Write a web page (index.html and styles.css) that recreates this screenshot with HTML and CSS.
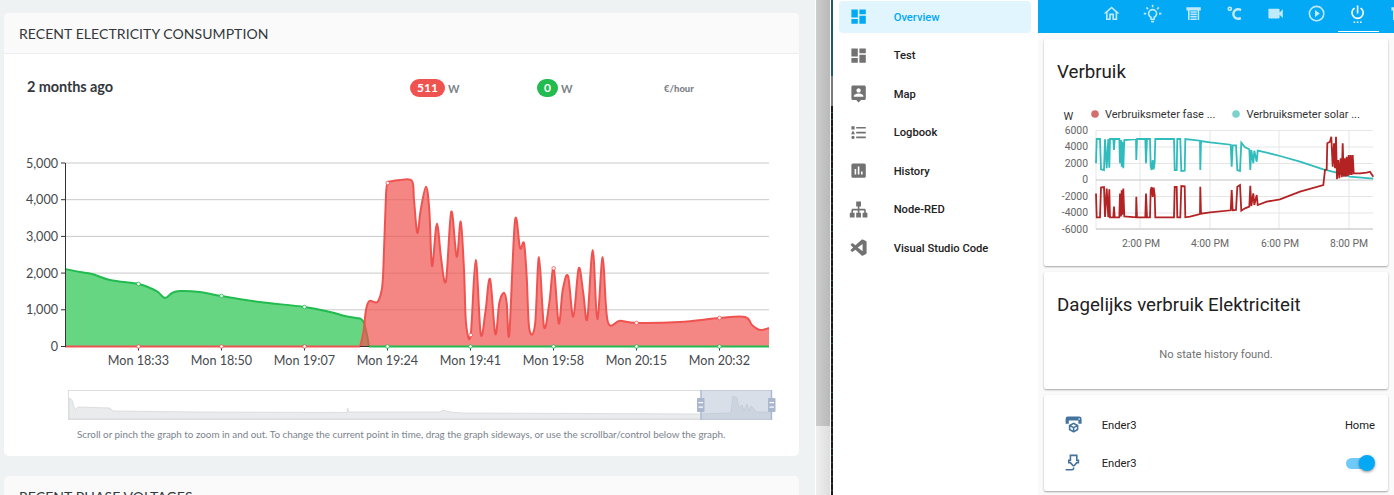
FILE: index.html
```html
<!DOCTYPE html>
<html lang="en">
<head>
  <meta charset="UTF-8">
  <title>Energy dashboard</title>
  <link rel="stylesheet" href="styles.css">
</head>
<body>
  <main class="energy">
    <section class="panel panel-main">
      <h2 class="panel-head">RECENT ELECTRICITY CONSUMPTION</h2>
      <div class="readings">
        <strong class="ago">2 months ago</strong>
        <div class="reading"><span class="badge badge-red">511</span><span class="unit">W</span></div>
        <div class="reading"><span class="badge badge-green">0</span><span class="unit">W</span></div>
        <div class="reading"><span class="unit unit-small">€/hour</span></div>
      </div>
      <svg id="powerChart" class="power-chart" viewBox="4 147 795 275" width="795" height="275"></svg>
      <p class="hint">Scroll or pinch the graph to zoom in and out. To change the current point in time, drag the graph sideways, or use the scrollbar/control below the graph.</p>
    </section>
    <section class="panel">
      <h2 class="panel-head">RECENT PHASE VOLTAGES</h2>
    </section>
  </main>

  <div class="scrollbar"><div class="scrollbar-thumb"></div></div>
  <div class="edge"><div class="edge-teal"></div><div class="edge-grey"></div><div class="edge-dark"></div></div>

  <nav class="sidebar">
    <a class="nav-item active"><svg class="icon" viewBox="0 0 24 24"><path d="M13,3V9H21V3M13,21H21V11H13M3,21H11V15H3M3,13H11V3H3V13Z"/></svg>Overview</a>
    <a class="nav-item"><svg class="icon" viewBox="0 0 24 24"><path d="M13,3V9H21V3M13,21H21V11H13M3,21H11V15H3M3,13H11V3H3V13Z"/></svg>Test</a>
    <a class="nav-item"><svg class="icon" viewBox="0 0 24 24"><path d="M18,16H6V15.1C6,13.1 10,12 12,12C14,12 18,13.1 18,15.1M12,5.3C13.5,5.3 14.7,6.5 14.7,8C14.7,9.5 13.5,10.7 12,10.7C10.5,10.7 9.3,9.5 9.3,8C9.3,6.5 10.5,5.3 12,5.3M19,2H5C3.89,2 3,2.89 3,4V18A2,2 0 0,0 5,20H9L12,23L15,20H19A2,2 0 0,0 21,18V4C21,2.89 20.1,2 19,2Z"/></svg>Map</a>
    <a class="nav-item"><svg class="icon" viewBox="0 0 24 24"><path d="M5,9.5L7.5,14H2.5L5,9.5M3,4H7V8H3V4M5,20A2,2 0 0,0 7,18A2,2 0 0,0 5,16A2,2 0 0,0 3,18A2,2 0 0,0 5,20M9,5V7H21V5H9M9,19H21V17H9V19M9,13H21V11H9V13Z"/></svg>Logbook</a>
    <a class="nav-item"><svg class="icon" viewBox="0 0 24 24"><path d="M19,3H5C3.9,3 3,3.9 3,5V19C3,20.1 3.9,21 5,21H19C20.1,21 21,20.1 21,19V5C21,3.9 20.1,3 19,3M9,17H7V10H9V17M13,17H11V7H13V17M17,17H15V13H17V17Z"/></svg>History</a>
    <a class="nav-item"><svg class="icon" viewBox="0 0 24 24"><path d="M9,2V8H11V11H5C3.89,11 3,11.89 3,13V16H1V22H7V16H5V13H11V16H9V22H15V16H13V13H19V16H17V22H23V16H21V13C21,11.89 20.11,11 19,11H13V8H15V2H9Z"/></svg>Node-RED</a>
    <a class="nav-item"><svg class="icon" viewBox="0 0 24 24"><path fill-rule="evenodd" d="M17,16.47V7.39L11,11.93M2.22,9.19C1.93,8.87 1.88,8.4 2.2,8.1C2.2,8.1 3.4,7 3.75,6.67C4.1,6.34 4.5,6.5 4.65,6.62L8,9.17L15.78,2.05C16.09,1.74 16.63,1.62 17.25,1.95L21.25,3.86C21.6,4.06 22,4.38 22,5V18.87C22,19.28 21.7,19.72 21.39,19.89L17,22.06C16.68,22.19 16.06,22.06 15.85,21.85L8,14.7L4.62,17.27C4.3,17.5 3.9,17.45 3.64,17.22L2.2,15.9C1.88,15.58 1.92,15.1 2.25,14.77L5.2,11.93L2.22,9.19Z"/></svg>Visual Studio Code</a>
  </nav>

  <div class="hass">
    <header class="tabs">
      <a class="tab"><svg class="icon" viewBox="0 0 24 24"><path d="M12 5.69L17 10.19V18H15V12H9V18H7V10.19L12 5.69M12 3L2 12H5V20H11V14H13V20H19V12H22L12 3Z"/></svg></a>
      <a class="tab"><svg class="icon" viewBox="0 0 24 24"><path d="M20,11H23V13H20V11M1,11H4V13H1V11M13,1V4H11V1H13M4.92,3.5L7.05,5.64L5.63,7.05L3.5,4.93L4.92,3.5M16.95,5.63L19.07,3.5L20.5,4.93L18.36,7.05L16.95,5.63M12,6A6,6 0 0,1 18,12C18,14.22 16.79,16.16 15,17.2V19A1,1 0 0,1 14,20H10A1,1 0 0,1 9,19V17.2C7.21,16.16 6,14.22 6,12A6,6 0 0,1 12,6M14,21V22A1,1 0 0,1 13,23H11A1,1 0 0,1 10,22V21H14M11,18H13V15.87C14.73,15.43 16,13.86 16,12A4,4 0 0,0 12,8A4,4 0 0,0 8,12C8,13.86 9.27,15.43 11,15.87V18Z"/></svg></a>
      <a class="tab"><svg class="icon" viewBox="0 0 24 24"><path d="M3 4H21V8H19V20H17V8H7V20H5V8H3V4M8 9H16V11H8V9M8 12H16V14H8V12M8 15H16V17H8V15M8 18H16V20H8V18Z"/></svg></a>
      <a class="tab"><svg class="icon" viewBox="0 0 24 24"><path d="M16.5,5C18.05,5 19.5,5.47 20.69,6.28L19.53,9.17C18.73,8.44 17.67,8 16.5,8C14,8 12,10 12,12.5C12,15 14,17 16.5,17C17.53,17 18.47,16.66 19.23,16.08L20.37,18.93C19.24,19.61 17.92,20 16.5,20C12.36,20 9,16.64 9,12.5C9,8.36 12.36,5 16.5,5M6,3A3,3 0 0,1 9,6A3,3 0 0,1 6,9A3,3 0 0,1 3,6A3,3 0 0,1 6,3M6,5A1,1 0 0,0 5,6A1,1 0 0,0 6,7A1,1 0 0,0 7,6A1,1 0 0,0 6,5Z"/></svg></a>
      <a class="tab"><svg class="icon" viewBox="0 0 24 24"><path d="M17,10.5V7A1,1 0 0,0 16,6H4A1,1 0 0,0 3,7V17A1,1 0 0,0 4,18H16A1,1 0 0,0 17,17V13.5L21,17.5V6.5L17,10.5Z"/></svg></a>
      <a class="tab"><svg class="icon" viewBox="0 0 24 24"><path d="M10,16.5L16,12L10,7.5V16.5M12,2A10,10 0 0,0 2,12A10,10 0 0,0 12,22A10,10 0 0,0 22,12A10,10 0 0,0 12,2M12,20C7.59,20 4,16.41 4,12C4,7.59 7.59,4 12,4C16.41,4 20,7.59 20,12C20,16.41 16.41,20 12,20Z"/></svg></a>
      <a class="tab active"><svg class="icon" viewBox="0 0 24 24"><path d="M15,24H17V22H15M16.56,4.44L15.11,5.89C16.84,6.94 18,8.83 18,11A6,6 0 0,1 12,17A6,6 0 0,1 6,11C6,8.83 7.16,6.94 8.88,5.88L7.44,4.44C5.36,5.88 4,8.28 4,11A8,8 0 0,0 12,19A8,8 0 0,0 20,11C20,8.28 18.64,5.88 16.56,4.44M13,2H11V12H13M11,24H13V22H11M7,24H9V22H7V24Z"/></svg></a>
      <a class="tab"><svg class="icon" viewBox="0 0 24 24"><path d="M3 4H21V8H19V20H17V8H7V20H5V8H3V4Z"/></svg></a>
    </header>
    <div class="cards">
      <section class="card card-graph">
        <h1 class="card-title">Verbruik</h1>
        <svg id="usageChart" class="usage-chart" viewBox="1044 104 344 146" width="344" height="146"></svg>
      </section>
      <section class="card card-empty">
        <h1 class="card-title">Dagelijks verbruik Elektriciteit</h1>
        <p class="no-history">No state history found.</p>
      </section>
      <section class="card card-rows">
        <div class="row">
          <svg class="icon icon-state" viewBox="0 0 24 24"><path d="M19,6A1,1 0 0,0 20,5A1,1 0 0,0 19,4A1,1 0 0,0 18,5A1,1 0 0,0 19,6M19,2A3,3 0 0,1 22,5V11H18V7H6V11H2V5A3,3 0 0,1 5,2H19M18,18.25C18,18.63 17.79,18.96 17.47,19.13L12.57,21.82C12.4,21.94 12.2,22 12,22C11.8,22 11.6,21.94 11.43,21.82L6.53,19.13C6.21,18.96 6,18.63 6,18.25V13C6,12.62 6.21,12.29 6.53,12.12L11.43,9.68C11.6,9.56 11.8,9.5 12,9.5C12.2,9.5 12.4,9.56 12.57,9.68L17.47,12.12C17.79,12.29 18,12.62 18,13V18.25M12,11.65L9.04,13L12,14.6L14.96,13L12,11.65M8,17.66L11,19.29V16.33L8,14.71V17.66M16,17.66V14.71L13,16.33V19.29L16,17.66Z"/></svg>
          <span class="row-name">Ender3</span>
          <span class="row-value">Home</span>
        </div>
        <div class="row">
          <svg class="icon icon-state" viewBox="0 0 24 24"><path d="M7,2H17V8H19V13H16.5L13,17H11L7.5,13H5V8H7V2M9,4V10H7V11H8.41L11.91,15H12.09L15.59,11H17V10H15V4H9M10,22H2V20H10A1,1 0 0,0 11,19V18H13V19A3,3 0 0,1 10,22Z"/></svg>
          <span class="row-name">Ender3</span>
          <span class="toggle"><span class="toggle-knob"></span></span>
        </div>
      </section>
    </div>
  </div>
  <script src="chart.js"></script>
</body>
</html>
```

FILE: styles.css
```css
* { box-sizing: border-box; }
html, body {
  margin: 0;
  height: 495px;
  overflow: hidden;
}
body {
  display: flex;
  width: 1394px;
  background: #fff;
  font-family: Roboto, Arial, sans-serif;
}
/* Left window: energy monitor */
.energy {
  width: 815px;
  height: 495px;
  flex: none;
  overflow: hidden;
  background: #eef2f3;
  padding: 13px 16px 0 4px;
  font-family: Lato, Arial, sans-serif;
}
.panel {
  background: #fff;
  border-radius: 5px;
  margin-bottom: 20px;
  overflow: hidden;
}
.panel-main {
  height: 443px;
}
.panel-head {
  margin: 0;
  height: 41px;
  padding: 0 15px;
  background: #fafafa;
  border-bottom: 1px solid #eceeef;
  color: #33383c;
  font-size: 14px;
  font-weight: 400;
  letter-spacing: 0.07px;
  line-height: 41px;
}
.readings {
  display: grid;
  grid-template-columns: 383px 127px 127px auto;
  align-items: center;
  height: 18px;
  margin: 25px 0 50px 23px;
}
.ago {
  color: #33383c;
  font-size: 14.5px;
  font-weight: 700;
  letter-spacing: -0.1px;
  line-height: 16px;
  margin-top: -2px;
}
.reading {
  display: flex;
  align-items: center;
  gap: 3px;
}
.badge {
  min-width: 21px;
  height: 18px;
  padding: 0 7px;
  border-radius: 9px;
  color: #fff;
  font-size: 12px;
  font-weight: 700;
  line-height: 18px;
  text-align: center;
}
.badge-red { background: #ef5350; }
.badge-green { background: #22bb4f; }
.unit {
  color: #7d8288;
  font-size: 11px;
  font-weight: 700;
}
.unit-small {
  font-size: 9.5px;
  font-weight: 900;
}
.power-chart {
  display: block;
}
.power-chart text {
  fill: #45494d;
  font-family: Lato, Arial, sans-serif;
  font-size: 12.6px;
}
.hint {
  margin: 6px 0 0 73px;
  color: #7b838c;
  font-size: 9.83px;
  line-height: 12px;
  white-space: nowrap;
}
/* Window edge between the two windows */
.scrollbar {
  width: 15px;
  flex: none;
  background: linear-gradient(90deg, #efefef, #dedede);
  border-left: 1px solid #fff;
}
.scrollbar-thumb {
  height: 426px;
  background: linear-gradient(90deg, #cdcdcd, #b9b9b9);
}
.edge {
  width: 3px;
  flex: none;
  display: flex;
  flex-direction: column;
  border-left: 1px solid #fff;
}
.edge-teal { height: 76px; background: #1f5c62; }
.edge-grey { height: 30px; background: #7a7a7a; }
.edge-dark {
  flex: 1;
  background: repeating-linear-gradient(180deg, #1b1b1b 0 6px, #2c5a32 6px 7px);
}
/* Sidebar */
.sidebar {
  width: 205px;
  flex: none;
  display: flex;
  flex-direction: column;
  gap: 6.5px;
  padding: 1px 7px 0 6px;
  background: #fff;
}
.nav-item {
  display: flex;
  align-items: center;
  height: 32px;
  padding-left: 9.5px;
  border-radius: 4px;
  color: #212121;
  font-size: 11.2px;
  font-weight: 500;
}
.icon {
  width: 19.2px;
  height: 19.2px;
  flex: none;
  fill: currentColor;
}
.nav-item .icon {
  margin-right: 26px;
  color: #727272;
}
.nav-item.active {
  background: #e1f5fe;
  color: #03a9f4;
}
.nav-item.active .icon {
  color: #03a9f4;
}
/* Lovelace view */
.hass {
  flex: 1;
  min-width: 0;
  background: #fafafa;
}
.tabs {
  display: flex;
  height: 33px;
  padding-left: 53.5px;
  background: #03a9f4;
  overflow: hidden;
}
.tab {
  width: 41px;
  height: 32px;
  flex: none;
  display: flex;
  justify-content: center;
  padding-top: 4px;
  color: rgba(255, 255, 255, 0.75);
}
.tab.active {
  color: #fff;
  border-bottom: 1px solid #fff;
}
.cards {
  display: flex;
  flex-direction: column;
  gap: 6px;
  padding: 6px 6px 0;
}
.card {
  background: #fff;
  border-radius: 2px;
  box-shadow: 0 1px 2px rgba(0, 0, 0, 0.35);
}
.card-title {
  margin: 0;
  padding: 21px 13px 0;
  color: #212121;
  font-size: 18.7px;
  font-weight: 400;
  line-height: 24px;
}
.card-graph { height: 227px; }
.usage-chart {
  display: block;
  margin-top: 20px;
}
.usage-chart text {
  fill: #666;
  font-family: Roboto, Arial, sans-serif;
  font-size: 10.4px;
}
.usage-chart .legend {
  fill: #333;
  font-size: 11px;
}
.card-empty { height: 117px; }
.no-history {
  margin: 31px 0 0;
  color: #727272;
  font-size: 11.2px;
  line-height: 14px;
  text-align: center;
}
.card-rows {
  height: 96px;
  padding: 11px 13px 9px 19.5px;
}
.row {
  display: flex;
  align-items: center;
  height: 38px;
  color: #212121;
  font-size: 11.2px;
}
.icon-state {
  margin-right: 19px;
  color: #44739e;
}
.row-name { flex: 1; }
.toggle {
  position: relative;
  width: 28px;
  height: 11px;
  margin-right: 1px;
  border-radius: 6px;
  background: #6fcafa;
}
.toggle-knob {
  position: absolute;
  top: -2.5px;
  right: -1px;
  width: 16px;
  height: 16px;
  border-radius: 50%;
  background: #03a9f4;
  box-shadow: 0 1px 3px rgba(0, 0, 0, 0.45);
}
```

FILE: chart.js
```js
const NS = 'http://www.w3.org/2000/svg';

function add(svg, tag, attrs, text) {
  const el = document.createElementNS(NS, tag);
  for (const k in attrs) el.setAttribute(k, attrs[k]);
  if (text !== undefined) el.textContent = text;
  svg.appendChild(el);
  return el;
}

// Smooth line through the points
function smooth(pts) {
  let d = 'M' + pts[0][0] + ',' + pts[0][1];
  for (let i = 0; i < pts.length - 1; i++) {
    const p0 = pts[i - 1] || pts[i], p1 = pts[i], p2 = pts[i + 1], p3 = pts[i + 2] || p2;
    const c1x = p1[0] + (p2[0] - p0[0]) / 6, c1y = p1[1] + (p2[1] - p0[1]) / 6;
    const c2x = p2[0] - (p3[0] - p1[0]) / 6, c2y = p2[1] - (p3[1] - p1[1]) / 6;
    d += 'C' + c1x.toFixed(1) + ',' + c1y.toFixed(1) + ' ' + c2x.toFixed(1) + ',' + c2y.toFixed(1) + ' ' + p2[0] + ',' + p2[1];
  }
  return d;
}

function straight(pts) {
  return pts.map(p => p[0] + ',' + p[1]).join(' ');
}

/* Electricity consumption chart, in page coordinates */
const power = document.getElementById('powerChart');
const base = 346.5;

const green = [[65,269],[80,272],[92,274],[110,280],[138.5,284],[150,288],[158,292],[165,298],[172,293],[180,291],[200,292],[221.5,296],[260,302],[304.5,307],[330,312],[345,316],[356,318],[361,319],[364,323],[367,335],[369,base]];
const red = [[360,base],[363.3,333],[366,310],[369.3,301],[377.3,302],[381.7,290],[383.3,270],[386,195],[387.7,183],[390,181.5],[400,180],[412,181],[414,200],[417.3,233],[420.7,210],[426,186.7],[429.3,210],[432,266],[436,228],[438,228],[441.3,260],[446,280.7],[451.3,211.7],[456.7,256.7],[460.7,221.7],[464,270],[466,323],[470.7,335],[475.7,260],[480.7,334],[485.3,313],[490,279],[495.3,334],[499.3,303],[504,292.7],[506.7,303],[509.3,334],[515,220.7],[520,248],[524,243.3],[526.7,276.7],[529.3,329],[535,325],[539,257.3],[544,326.7],[549.3,303],[553.7,268.3],[558.7,323.3],[562.7,290],[568,276],[573.3,316.7],[578.7,268.3],[583.3,293.3],[587.3,319],[592.7,250],[597.3,319],[602.7,257.3],[607.7,321.3],[620,320.7],[636.5,323],[680,322],[719.5,318],[745,317],[752,325],[760,330],[769,328]];

[163, 199.7, 236.4, 273.1, 309.8].forEach(y => {
  add(power, 'line', { x1: 65, x2: 769, y1: y, y2: y, stroke: '#c9c9c9', 'stroke-width': 1 });
});

add(power, 'path', { d: smooth(green) + 'L65,' + base + 'Z', fill: '#66d682' });
add(power, 'path', { d: smooth(green), fill: 'none', stroke: '#22bb4f', 'stroke-width': 2 });
add(power, 'path', { d: smooth(red) + 'L769,' + base + 'Z', fill: '#ef5350', 'fill-opacity': 0.7 });
add(power, 'path', { d: smooth(red), fill: 'none', stroke: '#ef5350', 'stroke-width': 2 });

add(power, 'line', { x1: 65, x2: 360, y1: base, y2: base, stroke: '#ef5350', 'stroke-width': 2 });
add(power, 'line', { x1: 360, x2: 369, y1: base, y2: base, stroke: '#333', 'stroke-width': 1 });
add(power, 'line', { x1: 369, x2: 769, y1: base, y2: base, stroke: '#22bb4f', 'stroke-width': 2 });
add(power, 'line', { x1: 65.5, x2: 65.5, y1: 163, y2: 347, stroke: '#333', 'stroke-width': 1 });

['5,000', '4,000', '3,000', '2,000', '1,000', '0'].forEach((label, i) => {
  const y = 163 + i * 36.7;
  add(power, 'line', { x1: 61, x2: 65, y1: y, y2: y, stroke: '#333', 'stroke-width': 1 });
  add(power, 'text', { x: 58, y: y + 4.5, 'text-anchor': 'end' }, label);
});

['Mon 18:33', 'Mon 18:50', 'Mon 19:07', 'Mon 19:24', 'Mon 19:41', 'Mon 19:58', 'Mon 20:15', 'Mon 20:32'].forEach((label, i) => {
  const x = 138.5 + i * 83;
  const color = i < 3 ? '#ef5350' : '#22bb4f';
  add(power, 'line', { x1: x, x2: x, y1: base, y2: base + 4, stroke: '#333', 'stroke-width': 1 });
  add(power, 'circle', { cx: x, cy: base, r: 1.8, fill: '#fff', stroke: color, 'stroke-width': 0.8 });
  add(power, 'text', { x: x, y: 365, 'text-anchor': 'middle' }, label);
});

[[138.5,284,'#22bb4f'],[221.5,296,'#22bb4f'],[304.5,307,'#22bb4f'],[387.7,183,'#ef5350'],[470.7,335,'#ef5350'],[553.7,268.3,'#ef5350'],[636.5,323,'#ef5350'],[719.5,318,'#ef5350']].forEach(m => {
  add(power, 'circle', { cx: m[0], cy: m[1], r: 1.8, fill: '#fff', stroke: m[2], 'stroke-width': 0.8 });
});

// Scrollbar preview under the chart
const mini = [[69,398],[72,400],[75,410],[78,407],[110,408],[113,411],[200,412],[347,412.5],[347.5,408],[349,412],[440,412],[443,410],[450,412],[463,413],[700,414],[731,413],[733,396],[737,398],[739,408],[742,405],[744,411],[747,404],[749,411],[751,406],[754,409],[756,412],[771,412]];
add(power, 'rect', { x: 68.5, y: 390.5, width: 703, height: 29, fill: '#fff', stroke: '#dcdfe1', 'stroke-width': 1 });
add(power, 'polygon', { points: straight(mini) + ' 771,419 69,419', fill: '#e9ebed', stroke: '#d5d8da', 'stroke-width': 0.8 });
add(power, 'rect', { x: 701, y: 390, width: 71, height: 30, fill: '#a9b7cf', 'fill-opacity': 0.45 });
add(power, 'line', { x1: 701, x2: 701, y1: 390, y2: 420, stroke: '#a9b7cf', 'stroke-width': 1.4 });
add(power, 'line', { x1: 771.5, x2: 771.5, y1: 390, y2: 420, stroke: '#a9b7cf', 'stroke-width': 1.4 });
[697, 768].forEach(x => {
  add(power, 'rect', { x: x, y: 398, width: 7.5, height: 14, rx: 1, fill: '#a9b7cf' });
  add(power, 'rect', { x: x + 1.5, y: 402, width: 4.5, height: 1.2, fill: '#fff' });
  add(power, 'rect', { x: x + 1.5, y: 406.5, width: 4.5, height: 1.2, fill: '#fff' });
});

/* Verbruik history graph, in page coordinates */
const usage = document.getElementById('usageChart');
const left = 1096, right = 1373;

[130.5, 147, 163.5, 196.5, 213, 229].forEach(y => {
  add(usage, 'line', { x1: left, x2: right, y1: y, y2: y, stroke: '#e6e6e6', 'stroke-width': 1 });
});
[1096, 1140, 1210, 1279, 1349].forEach(x => {
  add(usage, 'line', { x1: x, x2: x, y1: 130.5, y2: 229, stroke: '#e6e6e6', 'stroke-width': 1 });
});
add(usage, 'line', { x1: left, x2: right, y1: 180, y2: 180, stroke: '#c4c4c4', 'stroke-width': 1 });
add(usage, 'line', { x1: left, x2: right, y1: 229, y2: 229, stroke: '#c4c4c4', 'stroke-width': 1 });

['6000', '4000', '2000', '0', '-2000', '-4000', '-6000'].forEach((label, i) => {
  add(usage, 'text', { x: 1088, y: 134 + i * 16.45, 'text-anchor': 'end' }, label);
});
[['2:00 PM', 1141], ['4:00 PM', 1210], ['6:00 PM', 1280], ['8:00 PM', 1349]].forEach(t => {
  add(usage, 'text', { x: t[1], y: 246.5, 'text-anchor': 'middle' }, t[0]);
});
add(usage, 'text', { x: 1063.5, y: 120, class: 'legend' }, 'W');
add(usage, 'circle', { cx: 1095, cy: 114, r: 3.8, fill: '#d16f6f' });
add(usage, 'text', { x: 1105, y: 118, class: 'legend' }, 'Verbruiksmeter fase ...');
add(usage, 'circle', { cx: 1236, cy: 114, r: 3.8, fill: '#7dd1cc' });
add(usage, 'text', { x: 1246.5, y: 118, class: 'legend' }, 'Verbruiksmeter solar ...');

// Traced from the 3x crop: x from 1040, y from 120
const pulses = [[168,130],[170,57],[180,57],[183,148],[192,150],[195,58],[200,145],[205,57],[208,143],[210,57],[220,57],[222,90],[224,57],[238,57],[240,130],[243,60],[245,140],[247,65],[250,145],[253,60],[288,57],[289,120],[291,57],[316,57],[318,130],[321,57],[330,57],[332,140],[335,150],[338,120],[341,148],[344,125],[346,57],[402,57],[404,150],[410,150],[412,57],[421,57],[424,153],[434,152],[436,57]];
const tealTail = [[480,62],[481,150],[483,63],[510,67],[572,74],[575,140],[578,76],[588,76],[592,150],[600,153],[604,68],[615,82],[628,88],[631,150],[634,90],[640,130],[643,92],[650,125],[653,92],[680,98],[720,108],[780,125],[850,148],[890,158],[930,170],[1000,176]];
const redTail = [[450,290],[480,282],[481,200],[483,281],[510,277],[572,271],[575,210],[578,271],[588,270],[592,200],[600,195],[604,272],[615,265],[628,260],[631,197],[634,258],[640,220],[643,255],[650,225],[653,255],[680,245],[720,238],[780,215],[850,195],[855,150],[860,148],[862,70],[870,65],[874,50],[878,140],[882,70],[885,145],[888,50],[891,178],[895,120],[898,175],[902,115],[905,172],[908,70],[911,170],[914,115],[917,170],[920,110],[923,168],[926,105],[929,165],[932,105],[935,165],[938,105],[941,160],[960,160],[980,158],[990,155],[1000,170]];

const toPage = p => [(1040 + p[0] / 3).toFixed(1), (120 + p[1] / 3).toFixed(1)];
const teal = pulses.concat(tealTail).map(toPage);
const dark = pulses.map(p => [p[0], 292 - (p[1] - 57) * 0.98]).concat(redTail).map(toPage);

add(usage, 'polyline', { points: straight(teal), fill: 'none', stroke: '#1ab5b5', 'stroke-width': 1.8, 'stroke-opacity': 0.9 });
add(usage, 'polyline', { points: straight(dark), fill: 'none', stroke: '#b01717', 'stroke-width': 1.8, 'stroke-opacity': 0.95 });
```
